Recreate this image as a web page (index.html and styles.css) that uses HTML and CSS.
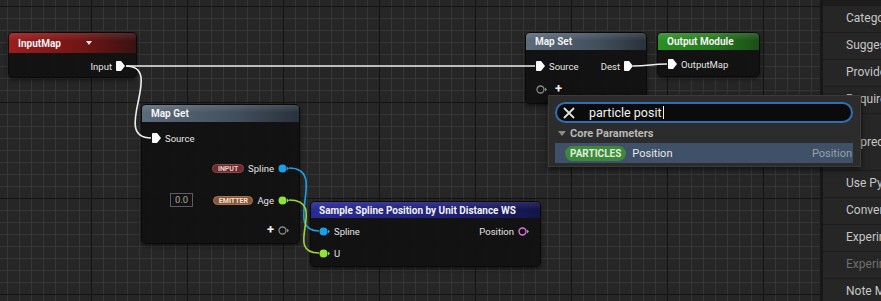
FILE: index.html
```html
<!DOCTYPE html>
<html lang="en">
<head>
    <meta charset="UTF-8">
    <title>Niagara Module Graph</title>
    <link rel="stylesheet" href="styles.css">
</head>
<body>
    <div class="editor">
        <div class="graph">
            <!-- InputMap -->
            <div class="node node-inputmap">
                <div class="node-head head-red">
                    <span class="title">InputMap</span>
                    <span class="caret"></span>
                </div>
                <div class="node-body">
                    <div class="row row-right">
                        <span class="label">Input</span>
                        <svg class="pin" width="9" height="10" viewBox="0 0 9 10"><path d="M1 0H5L9 5L5 10H1Q0 10 0 9V1Q0 0 1 0Z" fill="#fff"/></svg>
                    </div>
                </div>
            </div>

            <!-- Map Get -->
            <div class="node node-mapget">
                <div class="node-head head-grey"><span class="title">Map Get</span></div>
                <div class="node-body">
                    <div class="row">
                        <svg class="pin" width="9" height="10" viewBox="0 0 9 10"><path d="M1 0H5L9 5L5 10H1Q0 10 0 9V1Q0 0 1 0Z" fill="#fff"/></svg>
                        <span class="label">Source</span>
                    </div>
                    <div class="row row-right">
                        <span class="badge badge-input">INPUT</span>
                        <span class="label">Spline</span>
                        <svg class="pin" width="11" height="9" viewBox="0 0 11 9"><circle cx="4.5" cy="4.5" r="4" fill="#1aa0e6"/><path d="M9 2.5L11 4.5L9 6.5Z" fill="#1aa0e6"/></svg>
                    </div>
                    <div class="row row-age">
                        <span class="value-box">0.0</span>
                        <span class="badge badge-emitter">EMITTER</span>
                        <span class="label">Age</span>
                        <svg class="pin" width="11" height="9" viewBox="0 0 11 9"><circle cx="4.5" cy="4.5" r="4" fill="#8fe23a"/><path d="M9 2.5L11 4.5L9 6.5Z" fill="#8fe23a"/></svg>
                    </div>
                    <div class="row row-right">
                        <span class="plus">+</span>
                        <svg class="pin" width="11" height="9" viewBox="0 0 11 9"><circle cx="4.5" cy="4.5" r="3.5" fill="none" stroke="#8a8a8a" stroke-width="1.3"/><path d="M9 2.5L11 4.5L9 6.5Z" fill="#8a8a8a"/></svg>
                    </div>
                </div>
            </div>

            <!-- Map Set -->
            <div class="node node-mapset">
                <div class="node-head head-grey"><span class="title">Map Set</span></div>
                <div class="node-body">
                    <div class="row">
                        <svg class="pin" width="9" height="10" viewBox="0 0 9 10"><path d="M1 0H5L9 5L5 10H1Q0 10 0 9V1Q0 0 1 0Z" fill="#fff"/></svg>
                        <span class="label">Source</span>
                        <span class="label push">Dest</span>
                        <svg class="pin" width="9" height="10" viewBox="0 0 9 10"><path d="M1 0H5L9 5L5 10H1Q0 10 0 9V1Q0 0 1 0Z" fill="#fff"/></svg>
                    </div>
                    <div class="row">
                        <svg class="pin" width="11" height="9" viewBox="0 0 11 9"><circle cx="4.5" cy="4.5" r="3.5" fill="none" stroke="#8a8a8a" stroke-width="1.3"/><path d="M9 2.5L11 4.5L9 6.5Z" fill="#8a8a8a"/></svg>
                        <span class="plus">+</span>
                    </div>
                </div>
            </div>

            <!-- Output Module -->
            <div class="node node-output">
                <div class="node-head head-green"><span class="title">Output Module</span></div>
                <div class="node-body">
                    <div class="row">
                        <svg class="pin" width="9" height="10" viewBox="0 0 9 10"><path d="M1 0H5L9 5L5 10H1Q0 10 0 9V1Q0 0 1 0Z" fill="#fff"/></svg>
                        <span class="label">OutputMap</span>
                    </div>
                </div>
            </div>

            <!-- Sample Spline -->
            <div class="node node-spline">
                <div class="node-head head-blue"><span class="title">Sample Spline Position by Unit Distance WS</span></div>
                <div class="node-body">
                    <div class="row">
                        <svg class="pin" width="11" height="9" viewBox="0 0 11 9"><circle cx="4.5" cy="4.5" r="4" fill="#1aa0e6"/><path d="M9 2.5L11 4.5L9 6.5Z" fill="#1aa0e6"/></svg>
                        <span class="label">Spline</span>
                        <span class="label push">Position</span>
                        <svg class="pin" width="11" height="9" viewBox="0 0 11 9"><circle cx="4.5" cy="4.5" r="3.5" fill="none" stroke="#d07ad8" stroke-width="1.4"/><path d="M9 2.5L11 4.5L9 6.5Z" fill="#d07ad8"/></svg>
                    </div>
                    <div class="row">
                        <svg class="pin" width="11" height="9" viewBox="0 0 11 9"><circle cx="4.5" cy="4.5" r="4" fill="#8fe23a"/><path d="M9 2.5L11 4.5L9 6.5Z" fill="#8fe23a"/></svg>
                        <span class="label">U</span>
                    </div>
                </div>
            </div>

            <svg class="wires" width="820" height="301" viewBox="0 0 820 301">
                <path d="M126 66 L535 66" stroke="#ececec" stroke-width="1.6" fill="none"/>
                <path d="M126 66 C166 66 110 138 151 138" stroke="#ececec" stroke-width="1.6" fill="none"/>
                <path d="M633 66 C650 66 650 64 667 64" stroke="#ececec" stroke-width="1.6" fill="none"/>
                <path d="M289 168 C329 168 282 231 319 231" stroke="#1e9ee4" stroke-width="1.6" fill="none"/>
                <path d="M289 200 C329 200 282 253 319 253" stroke="#9ad63a" stroke-width="1.6" fill="none"/>
            </svg>
        </div>

        <div class="details">
            <div class="detail-row">Category</div>
            <div class="detail-row">Suggested</div>
            <div class="detail-row">Provided</div>
            <div class="detail-row">Requires</div>
            <div class="detail-row tall">Deprecated</div>
            <div class="detail-row">Use Python</div>
            <div class="detail-row">Conversion</div>
            <div class="detail-row">Experimental</div>
            <div class="detail-row dim">Experimental Message</div>
            <div class="detail-row">Note Message</div>
        </div>

        <div class="search-popup">
            <div class="search-box">
                <svg width="12" height="12" viewBox="0 0 12 12"><path d="M1 1L11 11M11 1L1 11" stroke="#e0e0e0" stroke-width="1.8"/></svg>
                <span class="search-text">particle posit</span><span class="text-caret"></span>
            </div>
            <div class="category"><span class="tri"></span>Core Parameters</div>
            <div class="result selected">
                <span class="badge-particles">PARTICLES</span>
                <span class="result-name">Position</span>
                <span class="result-type">Position</span>
            </div>
        </div>
    </div>
</body>
</html>
```

FILE: styles.css
```css
body {
    margin: 0;
    background-color: #262626;
    font-family: Roboto, "Liberation Sans", sans-serif;
    color: #e6e6e6;
}
.editor {
    position: relative;
    display: flex;
    width: 881px;
    height: 301px;
    overflow: hidden;
}
.graph {
    position: relative;
    flex: none;
    width: 820px;
    height: 301px;
    background-color: #262626;
    background-image:
        linear-gradient(to right, #131313 1px, transparent 1px),
        linear-gradient(to bottom, #131313 1px, transparent 1px),
        linear-gradient(to right, #363636 1px, transparent 1px),
        linear-gradient(to bottom, #363636 1px, transparent 1px);
    background-size: 96px 96px, 96px 96px, 12px 12px, 12px 12px;
    background-position: 91px 6px, 91px 6px, 7px 6px, 7px 6px;
}
.wires {
    position: absolute;
    left: 0;
    top: 0;
    pointer-events: none;
}

/* nodes */
.node {
    position: absolute;
    display: flex;
    flex-direction: column;
    box-sizing: border-box;
    background-color: rgba(18, 18, 18, 0.96);
    border: 1px solid #0a0a0a;
    border-radius: 5px;
    box-shadow: 0 2px 4px rgba(0, 0, 0, 0.5);
    overflow: hidden;
}
.node-head {
    display: flex;
    align-items: center;
    flex: none;
    padding: 0 9px;
    box-sizing: border-box;
}
.title {
    font-size: 10px;
    font-weight: bold;
    color: #f2f2f2;
    white-space: nowrap;
}
.head-red {
    background: linear-gradient(to bottom, rgba(255, 255, 255, 0.1), rgba(0, 0, 0, 0) 40%),
        linear-gradient(to right, #9c1d1d, #741515 55%, #3a1212);
}
.head-grey {
    background: linear-gradient(to bottom, rgba(255, 255, 255, 0.12), rgba(0, 0, 0, 0) 45%),
        linear-gradient(to right, #5c6a79, #445260 55%, #2a323b);
}
.head-green {
    background: linear-gradient(to bottom, rgba(255, 255, 255, 0.12), rgba(0, 0, 0, 0) 45%),
        linear-gradient(to right, #2d8f24, #237a1c 55%, #1b4e18);
}
.head-blue {
    background: linear-gradient(to bottom, rgba(255, 255, 255, 0.1), rgba(0, 0, 0, 0) 45%),
        linear-gradient(to right, #2a2a96, #21217a 55%, #15154a);
}
.caret {
    width: 0;
    height: 0;
    margin-left: 25px;
    border-left: 3px solid transparent;
    border-right: 3px solid transparent;
    border-top: 4px solid #e8e8e8;
}
.node-body {
    display: flex;
    flex-direction: column;
    flex: 1;
}
.row {
    display: flex;
    align-items: center;
    height: 14px;
    gap: 4px;
}
.row-right {
    justify-content: flex-end;
}
.label {
    font-size: 9.5px;
    color: #e4e4e4;
    white-space: nowrap;
}
.push {
    margin-left: auto;
}
.pin {
    flex: none;
}
.plus {
    font-size: 13px;
    font-weight: bold;
    color: #f0f0f0;
    line-height: 14px;
}

.node-inputmap {
    left: 8px;
    top: 32px;
    width: 129px;
    height: 46px;
}
.node-inputmap .node-head {
    height: 20px;
}
.node-inputmap .node-body {
    padding: 6px 11px 0;
}

.node-mapget {
    left: 141px;
    top: 104px;
    width: 159px;
    height: 140px;
}
.node-mapget .node-head {
    height: 17px;
}
.node-mapget .node-body {
    padding: 9px 10px 0 10px;
    gap: 16px;
}
.node-mapget .row-age {
    margin-top: 2px;
}
.value-box {
    box-sizing: border-box;
    width: 23px;
    height: 14px;
    margin-left: 18px;
    margin-right: auto;
    border: 1px solid #5c5c5c;
    font-size: 9.5px;
    line-height: 12px;
    text-align: center;
    color: #a6a6a6;
}
.badge {
    box-sizing: border-box;
    height: 9px;
    padding: 0 3px;
    border-radius: 5px;
    font-size: 7px;
    font-weight: bold;
    line-height: 8px;
    text-align: center;
    margin-right: 0;
}
.badge-input {
    width: 32px;
    background-color: #6a2c2c;
    border: 1px solid #8c4646;
    color: #ecc8c8;
}
.badge-emitter {
    width: 40px;
    background-color: #86573a;
    border: 1px solid #a8714e;
    color: #f4e2d2;
}

.node-mapset {
    left: 525px;
    top: 32px;
    width: 122px;
    height: 72px;
}
.node-mapset .node-head {
    height: 17px;
}
.node-mapset .node-body {
    padding: 9px 13px 0 10px;
    gap: 9px;
}
.node-mapset .plus {
    margin-left: 4px;
}

.node-output {
    left: 657px;
    top: 32px;
    width: 103px;
    height: 45px;
}
.node-output .node-head {
    height: 17px;
}
.node-output .node-body {
    padding: 7px 10px 0;
}

.node-spline {
    left: 310px;
    top: 201px;
    width: 231px;
    height: 66px;
}
.node-spline .node-head {
    height: 16px;
    padding-left: 8px;
}
.node-spline .node-body {
    padding: 6px 11px 0 8px;
    gap: 8px;
}

/* details panel */
.details {
    flex: 1;
    box-sizing: border-box;
    padding-top: 5px;
    border-left: 3px solid #171717;
    background-color: #1c1c1c;
    overflow: hidden;
}
.detail-row {
    box-sizing: border-box;
    height: 27px;
    padding-left: 23px;
    border-top: 1px solid #1c1c1c;
    background-color: #262626;
    font-size: 12px;
    line-height: 25px;
    color: #c6c6c6;
    white-space: nowrap;
    overflow: hidden;
}
.detail-row.tall {
    height: 57px;
    line-height: 56px;
}
.detail-row.dim {
    color: #6e6e6e;
}

/* search popup */
.search-popup {
    position: absolute;
    left: 548px;
    top: 95px;
    width: 313px;
    height: 72px;
    box-sizing: border-box;
    padding: 6px 7px 0 6px;
    background-color: #2c2c2c;
    border: 1px solid #3a3a3a;
    box-shadow: 0 2px 6px rgba(0, 0, 0, 0.6);
}
.search-box {
    display: flex;
    align-items: center;
    box-sizing: border-box;
    height: 21px;
    padding-left: 6px;
    background-color: #0b0b0b;
    border: 2px solid #2f6fb6;
    border-radius: 11px;
}
.search-text {
    margin-left: 14px;
    font-size: 12.5px;
    color: #f2f2f2;
}
.text-caret {
    width: 1px;
    height: 13px;
    margin-left: 1px;
    background-color: #f2f2f2;
}
.category {
    display: flex;
    align-items: center;
    height: 20px;
    font-size: 11px;
    font-weight: bold;
    color: #b8b8b8;
}
.tri {
    width: 0;
    height: 0;
    margin: 0 4px 0 3px;
    border-left: 4px solid transparent;
    border-right: 4px solid transparent;
    border-top: 5px solid #8a8a8a;
}
.result {
    display: flex;
    align-items: center;
    height: 20px;
    padding: 0 1px 0 10px;
}
.result.selected {
    background-color: #3f5169;
}
.badge-particles {
    box-sizing: border-box;
    height: 15px;
    padding: 0 5px;
    border-radius: 8px;
    background-color: #3f873c;
    font-size: 10px;
    font-weight: bold;
    line-height: 15px;
    color: #d8f2d6;
}
.result-name {
    margin-left: 6px;
    font-size: 11px;
    color: #e8e8e8;
}
.result-type {
    margin-left: auto;
    font-size: 11px;
    color: #9aa0a8;
}
```
